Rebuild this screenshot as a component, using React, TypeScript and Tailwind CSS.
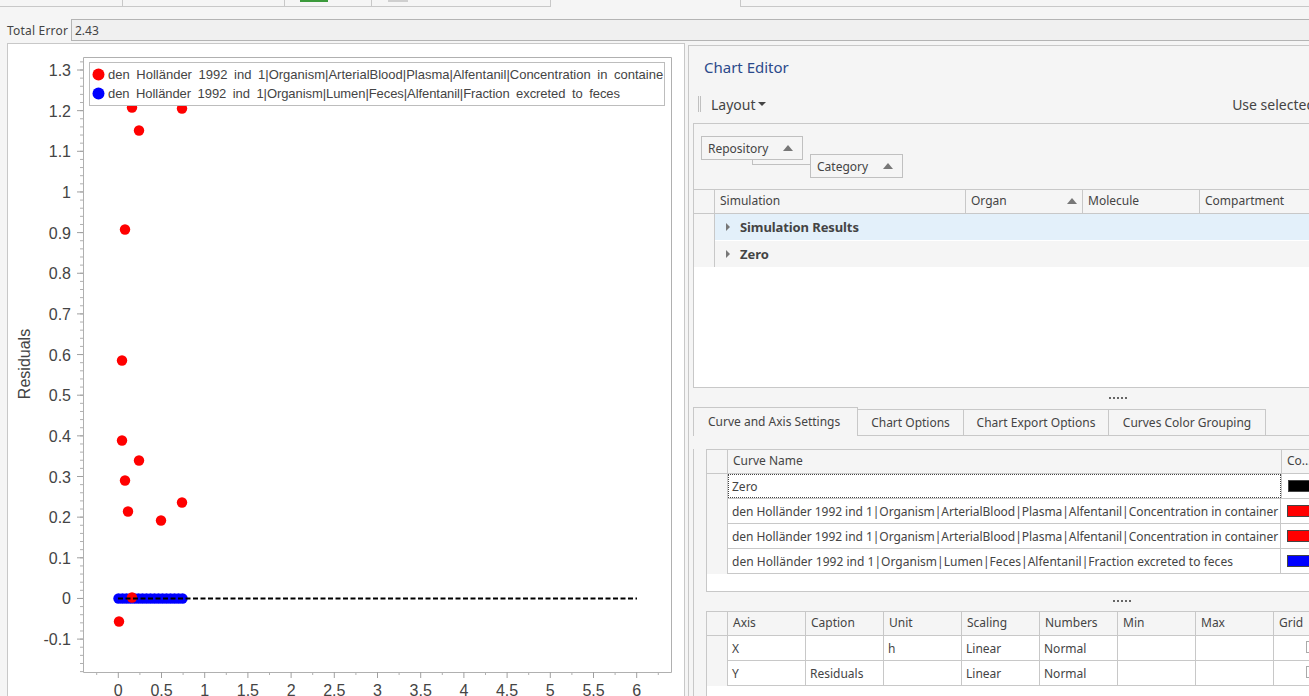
const red: [number, number][] = [
  [132, 107.5], [182, 108.5], [139, 130.5], [125, 229.5], [122, 360.5], [122, 440.5], [139, 460.5],
  [125, 480.5], [128, 511.5], [161, 520.5], [182, 502.5], [119, 621.5], [132, 597.5],
];
const blue = Array.from({ length: 17 }, (_, i) => 118.5 + i * 4);
const yLabels = ["1.3","1.2","1.1","1","0.9","0.8","0.7","0.6","0.5","0.4","0.3","0.2","0.1","0","-0.1"];
const xLabels = ["0","0.5","1","1.5","2","2.5","3","3.5","4","4.5","5","5.5","6"];
const yAt = (i: number) => 70 + i * 40.65;
const xAt = (i: number) => 118.3 + i * 43.2;

function Chart() {
  const yMinor: number[] = [];
  for (let y = 70 - 8.13; y < 672; y += 8.13) yMinor.push(y);
  return (
    <svg width="677" height="652" viewBox="8 44 677 652" className="block" style={{ fontFamily: '"Liberation Sans", sans-serif' }}>
      <path d="M83.5 57.5V672.5H671.5V57.5H83.5" fill="none" stroke="#b0b0b0" />
      {yMinor.map((y) => <line key={y} x1="80" x2="83" y1={y} y2={y} stroke="#b0b0b0" />)}
      {yLabels.map((l, i) => (
        <g key={l}>
          <line x1="77" x2="83" y1={yAt(i)} y2={yAt(i)} stroke="#a0a0a0" />
          <text x="71" y={yAt(i) + 6} textAnchor="end" fontSize="16" fill="#444">{l}</text>
        </g>
      ))}
      {xLabels.map((l, i) => (
        <g key={l}>
          <line x1={xAt(i)} x2={xAt(i)} y1="672" y2="678" stroke="#a0a0a0" />
          <line x1={xAt(i) + 21.6} x2={xAt(i) + 21.6} y1="672" y2="675" stroke="#b0b0b0" />
          <text x={xAt(i)} y="696" textAnchor="middle" fontSize="16" fill="#444">{l}</text>
        </g>
      ))}
      <line x1="96.7" x2="96.7" y1="672" y2="675" stroke="#b0b0b0" />
      <text transform="translate(30 364) rotate(-90)" textAnchor="middle" fontSize="16" fill="#444">Residuals</text>
      {blue.map((x) => <circle key={x} cx={x} cy="598.5" r="5.2" fill="#0000ff" />)}
      {red.map(([x, y]) => <circle key={`${x}-${y}`} cx={x} cy={y} r="5.2" fill="#ff0000" />)}
      <line x1="118" x2="637" y1="598.5" y2="598.5" stroke="#000" strokeWidth="2" strokeDasharray="5 2.5" />
    </svg>
  );
}

function Legend() {
  const rows = [
    ["#ff0000", "den Holländer 1992 ind 1|Organism|ArterialBlood|Plasma|Alfentanil|Concentration in containe", ""],
    ["#0000ff", "den Holländer 1992 ind 1|Organism|Lumen|Feces|Alfentanil|Fraction excreted to feces", "tracking-[-0.07px]"],
  ];
  return (
    <div className="absolute left-[81px] top-[18px] h-[44px] w-[576px] border border-[#bdbdbd] bg-white pt-[2px] overflow-hidden">
      {rows.map(([c, t, cls]) => (
        <div key={c} className="flex items-center h-[19px] pl-[2px] gap-[3px]">
          <svg width="13" height="13" viewBox="0 0 13 13" className="shrink-0"><circle cx="6.5" cy="6.5" r="6" fill={c} /></svg>
          <span className={`whitespace-nowrap text-[13px] text-[#444] [word-spacing:3px] font-['Liberation_Sans',sans-serif] ${cls}`}>{t}</span>
        </div>
      ))}
    </div>
  );
}

function Header({ w, children }: { w: number | string; children?: React.ReactNode }) {
  return (
    <div style={{ width: w }} className="shrink-0 h-full border-r border-[#c8c8c8] pl-[5px] pb-[2px] flex items-center">
      {children}
    </div>
  );
}

const Dots = ({ left }: { left: string }) => (
  <div className={`flex gap-[2px] ${left}`}>
    {[0, 1, 2, 3, 4].map((i) => <span key={i} className="w-[2px] h-[2px] bg-[#666]" />)}
  </div>
);

const Tri = () => (
  <svg width="10" height="6" viewBox="0 0 10 6"><path d="M5 0L10 6H0Z" fill="#777" /></svg>
);

function Chip({ label, w, cls }: { label: string; w: string; cls: string }) {
  return (
    <div className={`h-[24px] border border-[#c0c0c0] flex items-center justify-between pl-[6px] pr-[9px] bg-[#f5f5f5] ${w} ${cls}`}>
      <span className="pt-[2px]">{label}</span><Tri />
    </div>
  );
}

function Row({ children, cls = "" }: { children: React.ReactNode; cls?: string }) {
  return <div className={`flex h-[25px] border-b border-[#c8c8c8] ${cls}`}>{children}</div>;
}

function Swatch({ color }: { color: string }) {
  return (
    <div className="w-[40px] pl-[6px] flex items-center h-full">
      <div style={{ backgroundColor: color }} className="w-[30px] h-[12px] border border-[#444]" />
    </div>
  );
}

function CurveGrid() {
  const names = [
    "den Holländer 1992 ind 1|Organism|ArterialBlood|Plasma|Alfentanil|Concentration in container",
    "den Holländer 1992 ind 1|Organism|ArterialBlood|Plasma|Alfentanil|Concentration in container",
    "den Holländer 1992 ind 1|Organism|Lumen|Feces|Alfentanil|Fraction excreted to feces",
  ];
  const tracks = ["tracking-[-0.045px]", "tracking-[-0.045px]", "tracking-[0.025px]"];
  const colors = ["#ff0000", "#ff0000", "#0000ff"];
  return (
    <div className="ml-[12px] mt-[13px] h-[143px] w-[700px] border border-[#c8c8c8] bg-white">
      <div className="flex h-[24px] bg-[#f5f5f5] border-b border-[#c8c8c8]">
        <Header w={21} />
        <Header w={554}>Curve Name</Header>
        <div className="pl-[5px] pb-[2px] flex items-center">Co...</div>
      </div>
      <div className="flex">
        <div className="w-[21px] shrink-0 bg-[#f5f5f5] border-r border-[#c8c8c8]" />
        <div className="flex-1">
          <Row>
            <div className="w-[553px] shrink-0 border border-dotted border-[#444] pl-[3px] pt-[2px] flex items-center">Zero</div>
            <div className="w-px bg-[#c8c8c8]" />
            <Swatch color="#000" />
          </Row>
          {names.map((n, i) => (
            <Row key={i}>
              <div className={`w-[553px] shrink-0 border-r border-[#c8c8c8] pl-[4px] pt-[2px] flex items-center whitespace-nowrap overflow-hidden ${tracks[i]}`}>{n}</div>
              <Swatch color={colors[i]} />
            </Row>
          ))}
        </div>
      </div>
    </div>
  );
}

function AxisGrid() {
  const w = 78;
  const cols = ["Axis", "Caption", "Unit", "Scaling", "Numbers", "Min", "Max", "Grid"];
  const rows = [["X", "", "h", "Linear", "Normal", "", ""], ["Y", "Residuals", "", "Linear", "Normal", "", ""]];
  return (
    <div className="ml-[12px] mt-[9px] h-[100px] w-[700px] border-t border-l border-[#c8c8c8] bg-white">
      <div className="flex h-[24px] bg-[#f5f5f5] border-b border-[#c8c8c8]">
        <Header w={21} />
        {cols.map((c) => <Header key={c} w={w}>{c}</Header>)}
      </div>
      <div className="flex">
        <div className="w-[21px] shrink-0 bg-[#f5f5f5] border-r border-[#c8c8c8]" />
        <div>
          {rows.map((r) => (
            <Row key={r[0]}>
              {r.map((v, i) => (
                <div key={i} className="w-[78px] shrink-0 border-r border-[#c8c8c8] pl-[4px] pt-[2px] flex items-center">{v}</div>
              ))}
              <div className="w-[78px] shrink-0 flex items-center pl-[32px] pb-[2px]">
                <div className="w-[12px] h-[12px] border border-[#aaa] bg-white shrink-0" />
              </div>
            </Row>
          ))}
        </div>
      </div>
    </div>
  );
}

export default function App() {
  return (
    <div className="w-[1309px] h-[696px] overflow-hidden bg-[#f5f5f5] flex flex-col text-[12px] text-[#444] font-['Noto_Sans',sans-serif]">
      <div className="h-[19px] shrink-0">
        <div className="flex h-[7px]">
          <div className="w-[123px] border-r border-b border-[#c8c8c8]" />
          <div className="w-[162px] border-r border-b border-[#c8c8c8]" />
          <div className="w-[87px] border-r border-b border-[#c8c8c8] pl-[15px]">
            <div className="w-[28px] h-[2px] bg-[#3c9a3c]" />
          </div>
          <div className="w-[179px] border-r border-b border-[#c8c8c8] pl-[16px]">
            <div className="w-[20px] h-[2px] bg-[#cfcfcf]" />
          </div>
          <div className="w-[190px] border-r border-[#c8c8c8]" />
          <div className="flex-1 border-b border-[#c8c8c8]" />
        </div>
      </div>
      <div className="h-[22px] shrink-0 flex items-center pl-[7px]">
        <span className="w-[64px] tracking-[0.2px] pt-[2px]">Total Error</span>
        <div className="flex-1 h-full border border-r-0 border-[#b4b4b4] bg-[#f0f0f0] pl-[3px] pt-[1px] flex items-center">2.43</div>
      </div>
      <div className="flex flex-1 min-h-0 pt-[2px]">
        <div className="relative ml-[7px] w-[678px] h-[653px] bg-white border-l border-t border-r border-[#c8c8c8] shrink-0">
          <Chart />
          <Legend />
        </div>
        <div className="ml-[3px] mt-[2px] flex-1 min-w-0 border-l border-t border-[#c8c8c8] pl-[4px] overflow-hidden">
          <div className="h-[43px] flex items-end pl-[11px] pb-[11px] text-[15px] text-[#2b4a8b] leading-[22px]">Chart Editor</div>
          <div className="h-[34px] flex items-center justify-between text-[14px] w-[700px] pb-[4px]">
            <div className="flex items-center pl-[5px]">
              <div className="w-[3px] h-[16px] border-x border-[#c0c0c0] mr-[10px]" />
              <span>Layout</span>
              <svg width="8" height="4" viewBox="0 0 8 4" className="ml-[2px]"><path d="M0 0H8L4 4Z" fill="#444" /></svg>
            </div>
            <span className="whitespace-nowrap pr-[78px]">Use selected</span>
          </div>
          <div className="w-[700px] h-[265px] border border-[#c8c8c8] bg-white">
            <div className="relative h-[66px] flex items-start gap-[7px] pl-[7px] pt-[12px] bg-[#f5f5f5] border-b border-[#c8c8c8]">
              <Chip label="Repository" w="w-[102px]" cls="" />
              <Chip label="Category" w="w-[93px]" cls="mt-[18px]" />
              <div className="absolute left-[58px] top-[36px] w-[58px] h-[5px] border-l border-b border-[#c0c0c0]" />
            </div>
            <div className="flex h-[24px] bg-[#f5f5f5] border-b border-[#c8c8c8]">
              <Header w={21} />
              <Header w={251}>Simulation</Header>
              <Header w={117}><span className="flex-1">Organ</span><span className="mr-[5px]"><Tri /></span></Header>
              <Header w={117}>Molecule</Header>
              <Header w={180}>Compartment</Header>
            </div>
            <div className="flex">
              <div className="w-[21px] shrink-0 bg-[#f5f5f5] border-r border-[#c8c8c8]" />
              <div className="flex-1 font-bold text-[13px]">
                <div className="h-[26px] mb-px bg-[#e3f0fa] flex items-center pl-[11px] gap-[10px] tracking-[-0.1px]">
                  <svg width="4" height="8" viewBox="0 0 4 8"><path d="M0 0L4 4L0 8Z" fill="#777" /></svg>
                  <span className="pt-[2px]">Simulation Results</span>
                </div>
                <div className="h-[26px] bg-[#f5f5f5] flex items-center pl-[11px] gap-[10px]">
                  <svg width="4" height="8" viewBox="0 0 4 8"><path d="M0 0L4 4L0 8Z" fill="#777" /></svg>
                  <span className="pt-[2px]">Zero</span>
                </div>
              </div>
            </div>
          </div>
          <div className="h-[19px] flex items-center"><Dots left="ml-[416px]" /></div>
          <div className="flex items-end w-[700px] h-[29px] text-[12px]">
            <div className="w-[165px] h-[29px] border-l border-t border-r border-[#c8c8c8] pl-[14px] pt-[5px]">Curve and Axis Settings</div>
            <div className="w-[106px] h-[27px] border-r border-t border-b border-[#c8c8c8] flex items-center justify-center">Chart Options</div>
            <div className="w-[145px] h-[27px] border-r border-t border-b border-[#c8c8c8] flex items-center justify-center">Chart Export Options</div>
            <div className="w-[157px] h-[27px] border-r border-t border-b border-[#c8c8c8] flex items-center justify-center">Curves Color Grouping</div>
            <div className="flex-1 h-px border-b border-[#c8c8c8]" />
          </div>
          <div className="border-l border-[#c8c8c8] w-[700px]">
            <CurveGrid />
            <div className="h-[10px] flex items-end"><Dots left="ml-[419px]" /></div>
            <AxisGrid />
          </div>
        </div>
      </div>
    </div>
  );
}
